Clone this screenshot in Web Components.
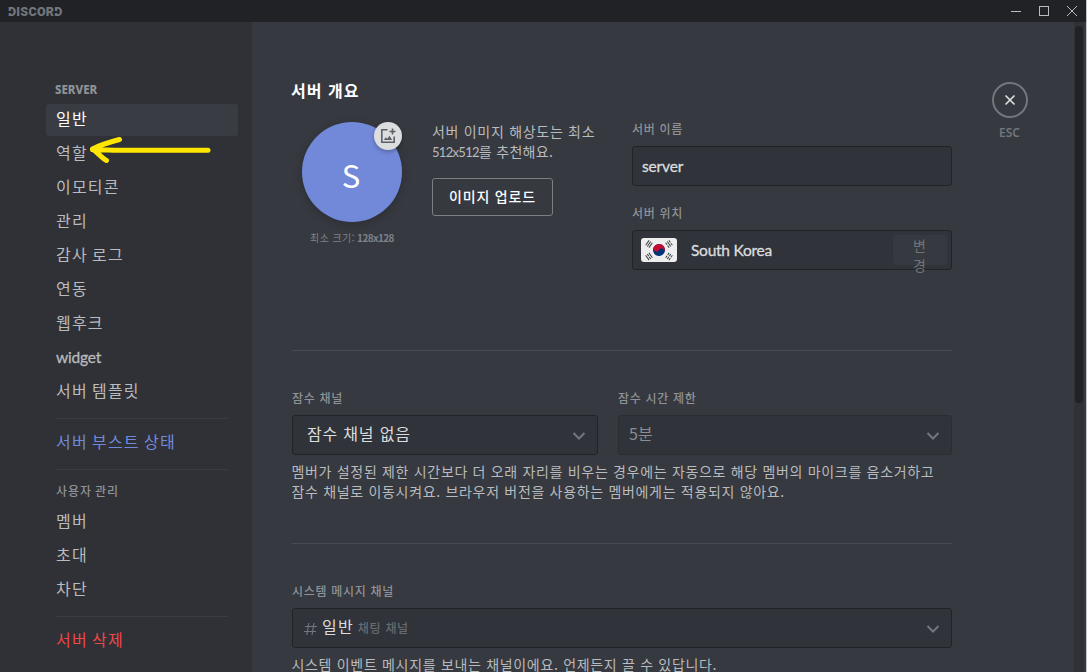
<!DOCTYPE html>
<html lang="ko">
<head>
<meta charset="utf-8">
<title>Discord</title>
<style>
  html, body { margin: 0; height: 100%; overflow: hidden; }
  body {
    background: #36393f;
    font-family: "Noto Sans CJK KR", sans-serif;
    --header: #8e9297;
    --normal: #b9bbbe;
  }
</style>
</head>
<body>
<settings-app></settings-app>

<script>
function define(name, html) {
  customElements.define(name, class extends HTMLElement {
    connectedCallback() {
      if (this.shadowRoot) return;
      this.attachShadow({ mode: 'open' }).innerHTML = html;
    }
  });
}

define('title-bar', `
  <style>
    :host { display: flex; justify-content: space-between; height: 22px; background: #202225; flex: none; }
    .logo { position: relative; margin-left: 8px; padding-top: 2px; height: 20px; font: 900 12.500px/20px Roboto, sans-serif; letter-spacing: .25px; color: #72767d; }
    /* notches in the first and last D */
    .logo::before, .logo::after { content: ""; position: absolute; top: 11px; width: 3px; height: 2px; background: #202225; }
    .logo::before { left: 0; }
    .logo::after { right: 6px; }
    .buttons { display: flex; }
    .buttons svg { width: 28px; height: 22px; display: block; }
  </style>
  <div class="logo">DISCORD</div>
  <div class="buttons">
    <svg fill="none" stroke="#b9bbbe"><path d="M9 11.5h10"/></svg>
    <svg fill="none" stroke="#b9bbbe"><rect x="9.5" y="6.5" width="9" height="9"/></svg>
    <svg fill="none" stroke="#b9bbbe"><path d="M9 6l10 10M19 6L9 16"/></svg>
  </div>
`);

define('nav-header', `
  <style>
    :host { display: block; height: 28px; padding: 0 10px; font-size: 12px; line-height: 26px; font-weight: 500; letter-spacing: .9px; word-spacing: -1px; color: var(--header); white-space: nowrap; }
  </style>
  <slot></slot>
`);

define('nav-item', `
  <style>
    :host { display: block; height: 32px; margin-bottom: 2px; padding: 0 10px; border-radius: 3px; box-sizing: border-box; font-size: 16px; line-height: 28px; letter-spacing: 1.2px; word-spacing: -1.5px; color: var(--normal); white-space: nowrap; }
    :host([latin]) { font-family: Lato, sans-serif; font-size: 15.500px; line-height: 30px; letter-spacing: -.2px; -webkit-text-stroke: .3px; }
    :host([selected]) { background: #393c43; color: #fff; }
    :host([accent]) { color: #7289da; }
    :host([danger]) { color: #f04747; }
  </style>
  <slot></slot>
`);

define('nav-line', `
  <style>
    :host { display: block; height: 1px; margin: 10px 10px 8px; background: #3b3d42; }
  </style>
`);

define('settings-nav', `
  <style>
    :host { display: block; width: 252px; flex: none; box-sizing: border-box; padding: 54px 14px 0 46px; background: #2f3136; }
    .first { padding-left: 9px; font-family: "Noto Sans", sans-serif; font-weight: 800; font-size: 11.500px; line-height: 28px; letter-spacing: 0; }
  </style>
  <nav-header class="first">SERVER</nav-header>
  <nav-item selected>일반</nav-item>
  <nav-item>역할</nav-item>
  <nav-item>이모티콘</nav-item>
  <nav-item>관리</nav-item>
  <nav-item>감사 로그</nav-item>
  <nav-item>연동</nav-item>
  <nav-item>웹후크</nav-item>
  <nav-item latin>widget</nav-item>
  <nav-item>서버 템플릿</nav-item>
  <nav-line></nav-line>
  <nav-item accent>서버 부스트 상태</nav-item>
  <nav-line></nav-line>
  <nav-header>사용자 관리</nav-header>
  <nav-item>멤버</nav-item>
  <nav-item>초대</nav-item>
  <nav-item>차단</nav-item>
  <nav-line></nav-line>
  <nav-item danger>서버 삭제</nav-item>
`);

define('server-icon', `
  <style>
    :host { display: flex; flex-direction: column; align-items: center; width: 120px; }
    .circle { position: relative; width: 100px; height: 100px; border-radius: 50%; background: #7289da; color: #fff; display: flex; align-items: center; justify-content: center; font-size: 31px; box-shadow: 0 2px 10px rgba(0, 0, 0, .2); }
    .circle span { line-height: 44px; padding-top: 5px; margin-left: -2px; }
    .badge { position: absolute; top: 0; right: 0; width: 28px; height: 28px; border-radius: 50%; background: #dcddde; box-shadow: 0 2px 4px rgba(0, 0, 0, .25); }
    .badge svg { display: block; }
    .hint { margin-top: 8px; font-size: 10px; line-height: 16px; letter-spacing: .4px; color: #7d828a; white-space: nowrap; }
    .hint b { font-weight: 700; letter-spacing: -.6px; margin-left: -1px; }
  </style>
  <div class="circle">
    <span>S</span>
    <div class="badge">
      <svg width="28" height="28" fill="none" stroke="#5d6067" stroke-width="1.600">
        <path d="M13.500 7.800H7.800v12.400h12.400V14.500M18.500 6.500v6M15.500 9.500h6"/>
        <path d="M9.800 18l2-2.800 1.500 1.600 2.200-3 2.700 4.200z" fill="#5d6067" stroke="none"/>
      </svg>
    </div>
  </div>
  <div class="hint">최소 크기: <b>128x128</b></div>
`);

define('form-field', `
  <style>
    :host { display: block; }
    .label { font-size: 12px; line-height: 16px; font-weight: 500; letter-spacing: .7px; color: var(--header); margin-bottom: 9px; white-space: nowrap; }
  </style>
  <div class="label"><slot name="label"></slot></div>
  <slot></slot>
`);

define('input-box', `
  <style>
    :host { display: flex; align-items: center; height: 40px; box-sizing: border-box; padding: 0 9px; border: 1px solid #212327; border-radius: 3px; background: #303339; font-size: 16px; color: #dcddde; white-space: nowrap; }
    :host([disabled]) { border-color: #2b2d32; color: #8b8d91; }
    :host([latin]) { font-family: Lato, sans-serif; font-size: 15.500px; letter-spacing: -.15px; -webkit-text-stroke: .3px; }
    .value { flex: 1; display: flex; align-items: center; line-height: 38px; }
    .chevron { display: none; margin-top: -1px; }
    :host([select]) .chevron { display: block; }
    :host([select]) .value { margin: -4px 0 0 1px; }
  </style>
  <div class="value"><slot></slot></div>
  <svg class="chevron" width="18" height="18" fill="none" stroke="#72767d" stroke-width="2"><path d="M3.500 7l5.500 5.500L14.500 7"/></svg>
`);

define('korea-flag', `
  <style>:host { display: block; width: 36px; height: 24px; margin-left: -1px; } svg { display: block; }</style>
  <svg width="36" height="24" viewBox="0 0 36 24">
    <rect width="36" height="24" rx="3" fill="#eee"/>
    <g transform="rotate(30 18 12)">
      <circle cx="18" cy="12" r="6" fill="#003478"/>
      <path d="M12 12a6 6 0 0 1 12 0a3 3 0 0 0-6 0a3 3 0 0 1-6 0z" fill="#c60c30"/>
    </g>
    <g stroke="#3b4044" stroke-width="1">
      <path transform="translate(8 6) rotate(-55)" d="M-3-2h6M-3 0h6M-3 2h6"/>
      <path transform="translate(28 6) rotate(55)" d="M-3-2h2.500M.5-2H3M-3 0h6M-3 2h2.500M.5 2H3"/>
      <path transform="translate(8 18.500) rotate(55)" d="M-3-2h6M-3 0h2.500M.5 0H3M-3 2h6"/>
      <path transform="translate(28 18.500) rotate(-55)" d="M-3-2h2.500M.5-2H3M-3 0h2.500M.5 0H3M-3 2h2.500M.5 2H3"/>
    </g>
  </svg>
`);

define('server-overview', `
  <style>
    :host { display: block; width: 660px; padding: 58px 0 0 40px; }
    h2 { margin: 0 0 0 -1px; font-size: 16px; line-height: 20px; font-weight: 700; letter-spacing: 1px; color: #fff; }
    .top { display: flex; margin-top: 21px; padding-top: 1px; height: 228px; }
    .upload { width: 180px; margin: -1px 20px 0; }
    .upload p { margin: 0 0 16px; font-size: 14px; line-height: 20px; letter-spacing: .7px; color: var(--normal); white-space: nowrap; }
    .size { font-family: Lato, sans-serif; font-size: 13px; letter-spacing: -.7px; }
    .second { letter-spacing: .3px; }
    .button { display: flex; align-items: center; justify-content: center; width: 121px; height: 38px; box-sizing: border-box; border: 1px solid #7c7f81; border-radius: 3px; font-size: 14px; font-weight: 500; letter-spacing: .8px; color: #fff; padding-bottom: 3px; }
    .fields { width: 320px; margin-top: -1px; display: flex; flex-direction: column; gap: 19px; }
    .region { margin: -1px 0 0 14px; flex: 1; letter-spacing: -.25px; }
    .change { width: 54px; height: 30px; margin-right: -5px; box-sizing: border-box; padding: 0 19px 0 20px; border-radius: 2px; background: #36393f; font: 14px/20px "Noto Sans CJK KR", sans-serif; letter-spacing: 0; -webkit-text-stroke: 0; color: #70747b; white-space: normal; word-break: break-all; }
    .line { height: 1px; background: #484b51; }
    .afk { display: grid; grid-template-columns: 306px 334px; gap: 20px; padding-top: 39px; }
    .note { margin: 6px 0 0 -.5px; font-size: 14px; line-height: 20px; letter-spacing: .68px; color: var(--normal); white-space: nowrap; }
    .afk + .note { margin-bottom: 42px; }
    .system { padding-top: 39px; }
    .big { letter-spacing: .8px; padding-left: 4px; }
    .name { letter-spacing: 1.200px; margin-left: -1px; }
    .hash { width: 13px; margin: 5px 6px 0 1px; }
    .kind { font-size: 12px; font-weight: 500; color: #686b71; margin: 3px 0 0 4px; letter-spacing: .7px; }
  </style>
  <h2>서버 개요</h2>
  <div class="top">
    <server-icon></server-icon>
    <div class="upload">
      <p>서버 이미지 해상도는 최소<br><span class="second"><span class="size">512x512</span>를 추천해요.</span></p>
      <div class="button">이미지 업로드</div>
    </div>
    <div class="fields">
      <form-field><span slot="label">서버 이름</span><input-box latin>server</input-box></form-field>
      <form-field><span slot="label">서버 위치</span>
        <input-box latin><korea-flag></korea-flag><span class="region">South Korea</span><div class="change">변경</div></input-box>
      </form-field>
    </div>
  </div>
  <div class="line"></div>
  <div class="afk">
    <form-field><span slot="label">잠수 채널</span><input-box select><span class="big">잠수 채널 없음</span></input-box></form-field>
    <form-field><span slot="label">잠수 시간 제한</span><input-box select disabled>5분</input-box></form-field>
  </div>
  <p class="note">멤버가 설정된 제한 시간보다 더 오래 자리를 비우는 경우에는 자동으로 해당 멤버의 마이크를 음소거하고<br>잠수 채널로 이동시켜요. 브라우저 버전을 사용하는 멤버에게는 적용되지 않아요.</p>
  <div class="line"></div>
  <div class="system">
    <form-field><span slot="label">시스템 메시지 채널</span>
      <input-box select>
        <svg class="hash" width="13" height="14" fill="none" stroke="#72767d" stroke-width="1.100"><path d="M4.800 1L2.800 13M10 1L8 13M1 4.500h12M0 9.500h12"/></svg>
        <span class="name">일반</span><span class="kind">채팅 채널</span>
      </input-box>
    </form-field>
  </div>
  <p class="note">시스템 이벤트 메시지를 보내는 채널이에요. 언제든지 끌 수 있답니다.</p>
`);

define('close-button', `
  <style>
    :host { display: block; width: 36px; margin: 60px 0 0 40px; text-align: center; }
    svg { display: block; }
    div { font: 600 12px/16px "Noto Sans", sans-serif; color: #72767d; margin: 7px 1px 0 0; }
  </style>
  <svg width="36" height="36" fill="none"><circle cx="18" cy="18" r="17" stroke="#72767d" stroke-width="2"/><path d="M13.500 13.500l9 9M22.500 13.500l-9 9" stroke="#dcddde" stroke-width="1.700"/></svg>
  <div>ESC</div>
`);

define('scroll-track', `
  <style>
    :host { display: block; width: 8px; margin-left: auto; padding: 4px 1px 0; background: #2f3136; border-right: 2px solid #36393f; }
    div { height: 377px; width: 8px; border-radius: 4px; background: #202225; }
  </style>
  <div></div>
`);

define('pointer-arrow', `
  <style>:host { position: absolute; left: 86px; top: 134px; } svg { display: block; }</style>
  <svg width="128" height="32" fill="none" stroke="#ffe600" stroke-width="5" stroke-linecap="round" stroke-linejoin="round">
    <path d="M122 16.300H28L6.500 15.500M33.500 5.500C24 8 14 11 6.500 15C12 19 16 24 20.500 26.500"/>
  </svg>
`);

define('settings-app', `
  <style>
    :host { position: relative; display: flex; flex-direction: column; height: 672px; width: 1086px; border-right: 1px solid #c4c5c7; overflow: hidden; }
    .body { display: flex; flex: 1; min-height: 0; }
    server-overview, close-button { flex: none; }
  </style>
  <title-bar></title-bar>
  <div class="body">
    <settings-nav></settings-nav>
    <server-overview></server-overview>
    <close-button></close-button>
    <scroll-track></scroll-track>
  </div>
  <pointer-arrow></pointer-arrow>
`);
</script>
</body>
</html>
